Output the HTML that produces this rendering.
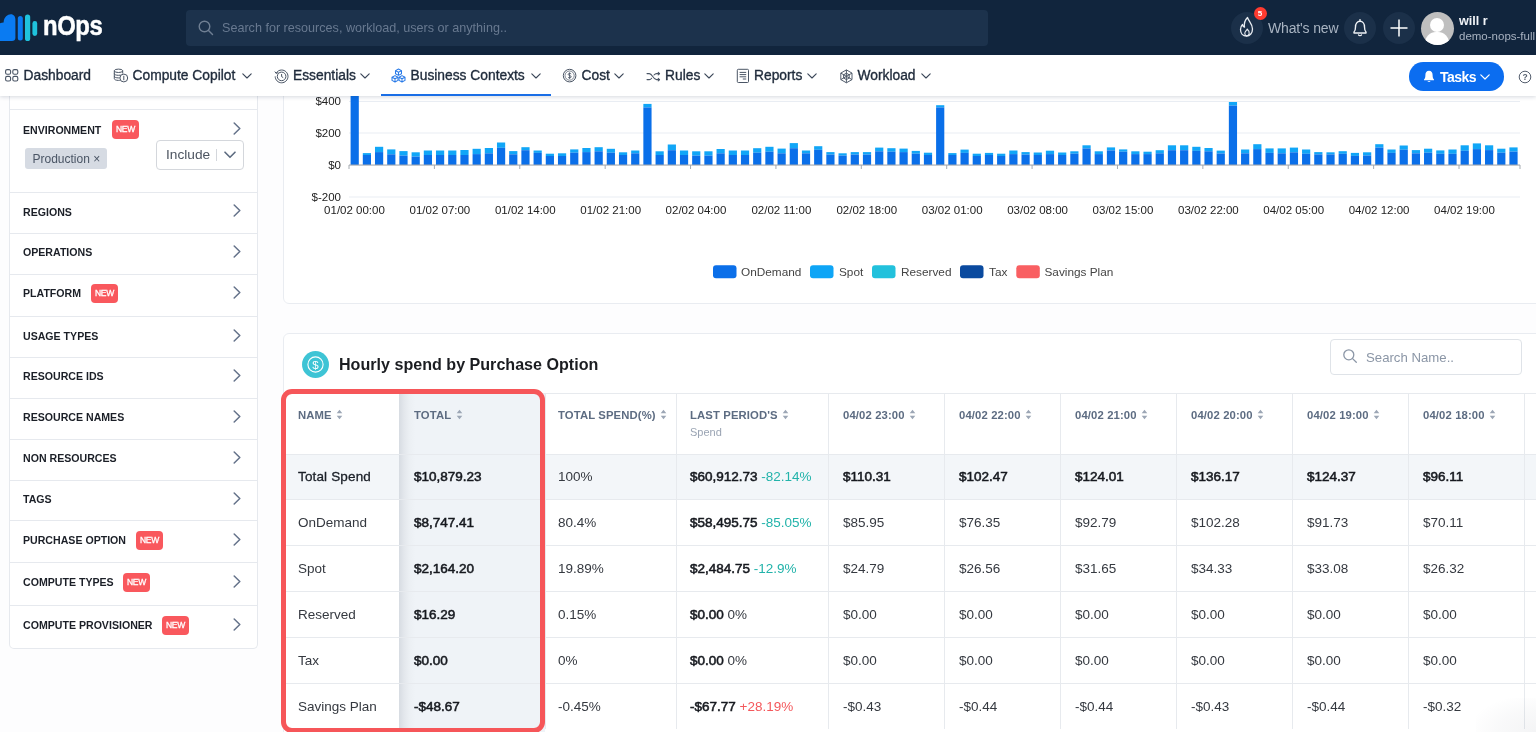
<!DOCTYPE html>
<html>
<head>
<meta charset="utf-8">
<title>nOps</title>
<style>
*{box-sizing:border-box;margin:0;padding:0}
html,body{width:1536px;height:732px;overflow:hidden;background:#fdfdfe;font-family:"Liberation Sans",sans-serif;color:#1f2937}
.abs{position:absolute}
#hdr{position:absolute;left:0;top:0;width:1536px;height:55px;background:#11253d}
#nav{position:absolute;left:0;top:55px;width:1536px;height:41px;background:#fff;box-shadow:0 1px 4px rgba(20,40,70,.18);z-index:5}
.ni{position:absolute;top:0;height:41px;line-height:42px;font-size:13.8px;color:#1f2b3b;white-space:nowrap;-webkit-text-stroke:.35px #1f2b3b}
.ni svg{position:absolute}
#search{position:absolute;left:186px;top:10px;width:802px;height:36px;border-radius:4px;background:#1c324c}
#search span{position:absolute;left:36px;top:0;line-height:36px;font-size:12.6px;color:#687990;white-space:nowrap}
.circ{position:absolute;width:32px;height:32px;border-radius:50%;background:#1b3049}
/* sidebar */
#side{position:absolute;left:9px;top:96px;width:249px;height:552.5px;background:#fff;border:1px solid #e6e9ee;border-top:none;border-radius:0 0 5px 5px}
.sr{position:absolute;left:0;width:247px;border-top:1px solid #e6e9ee}
.sl{position:absolute;left:13px;font-size:10.6px;font-weight:bold;color:#1b1f27;white-space:nowrap;letter-spacing:0}
.new{position:absolute;width:27px;height:19px;border-radius:4px;background:#f9585d;color:#fff;font-size:8.5px;line-height:19px;text-align:center;letter-spacing:-.2px;-webkit-text-stroke:.3px #fff}
.chev{position:absolute;left:223px;width:8px;height:13px}
/* cards */
.card{position:absolute;background:#fff;border:1px solid #e9ecf1;border-radius:6px}
#chart text{font-family:"Liberation Sans",sans-serif;font-size:11.5px;fill:#222}
/* table */
.th{position:absolute;font-size:11.3px;font-weight:bold;color:#5d6c82;white-space:nowrap;letter-spacing:.12px}
.td{position:absolute;font-size:13.5px;color:#353940;white-space:nowrap}
.b{font-weight:normal;color:#16191f;-webkit-text-stroke:.55px #16191f}
.hl{position:absolute;height:1px;background:#e7eaee}
.vl{position:absolute;width:1px;background:#e7eaee}
.srt{display:inline-block;width:7px;height:11px;margin-left:4.5px;vertical-align:-1.5px}
.g{color:#22b3aa}
.r{color:#f4585c}
</style>
</head>
<body>
<div id="root" style="position:absolute;left:0;top:0;width:1536px;height:732px;overflow:hidden;will-change:transform">
<!-- HEADER -->
<div id="hdr">
  <svg class="abs" style="left:0;top:12px" width="112" height="32" viewBox="0 0 112 32">
    <path d="M-5 20 C-5 13 0 10.5 3.6 10.5 C4 5 7.6 2.3 10.8 2.3 C13.8 2.3 15.4 4.6 15.4 7.5 L15.4 26 C15.4 28 14 29 12 29 L-5 29 Z" fill="#0a7bf2"/>
    <rect x="17.8" y="4" width="5" height="24.5" rx="2.5" fill="#0a7bf2"/>
    <rect x="25" y="2.5" width="5.2" height="26.5" rx="2.6" fill="#1fc3dd"/>
    <rect x="32.4" y="9" width="4.8" height="15" rx="2.4" fill="#1fc3dd"/>
  </svg>
  <div class="abs" id="logotxt" style="left:43px;top:9px;font-size:27px;line-height:34px;font-weight:bold;color:#fff;letter-spacing:-.5px;-webkit-text-stroke:.5px #fff;transform-origin:0 50%;transform:scaleX(.885)">nOps</div>
  <div id="search">
    <svg class="abs" style="left:11px;top:9px" width="18" height="18" viewBox="0 0 18 18"><circle cx="7.5" cy="7.5" r="5.3" fill="none" stroke="#6f7f93" stroke-width="1.4"/><path d="M11.5 11.5 L15.5 15.5" stroke="#6f7f93" stroke-width="1.4" stroke-linecap="round"/></svg>
    <span>Search for resources, workload, users or anything..</span>
  </div>
  <!-- right icons -->
  <div class="circ" style="left:1231px;top:12px"></div>
  <svg class="abs" style="left:1238px;top:16px" width="18" height="22" viewBox="0 0 18 22"><path d="M9.5 1.5 C10.5 5 14.5 7.5 14.5 13 C14.5 17 12 20 8.5 20 C5 20 2.5 17.5 2.5 13.5 C2.5 11 3.5 9.5 4.5 8.5 C4.8 10 5.5 11 6.5 11.2 C6 8 7 4 9.5 1.5 Z" fill="none" stroke="#e9edf2" stroke-width="1.3" stroke-linejoin="round"/><path d="M8.7 20 C6.8 19.3 6.3 17.3 7.3 15.8 C8 14.8 8.9 14.2 9.1 13 C10.6 14.3 11.5 15.8 11.2 17.5 C11 18.8 10 19.7 8.7 20 Z" fill="none" stroke="#e9edf2" stroke-width="1.1" stroke-linejoin="round"/></svg>
  <div class="abs" style="left:1253.5px;top:7px;width:13px;height:13px;border-radius:50%;background:#ff3b30;color:#fff;font-size:8px;font-weight:bold;line-height:13px;text-align:center">5</div>
  <div class="abs" style="left:1268px;top:18px;font-size:14px;line-height:20px;color:#a9b4c2;white-space:nowrap;letter-spacing:-.15px">What's new</div>
  <div class="circ" style="left:1344px;top:12px"></div>
  <svg class="abs" style="left:1351px;top:18px" width="18" height="20" viewBox="0 0 18 20"><path d="M3 15 L3 14 C4.3 13 4.5 11.5 4.5 9 C4.5 5.5 6.3 3.3 9 3.3 C11.7 3.3 13.5 5.5 13.5 9 C13.5 11.5 13.7 13 15 14 L15 15 Z" fill="none" stroke="#eef1f5" stroke-width="1.4" stroke-linejoin="round"/><path d="M7.6 17 C8 17.8 10 17.8 10.4 17" fill="none" stroke="#eef1f5" stroke-width="1.4" stroke-linecap="round"/><path d="M9 1.6 L9 3" stroke="#eef1f5" stroke-width="1.4" stroke-linecap="round"/></svg>
  <div class="circ" style="left:1383px;top:12px"></div>
  <svg class="abs" style="left:1389px;top:18px" width="20" height="20" viewBox="0 0 20 20"><path d="M10 1.5 V18.5 M1.5 10 H18.5" stroke="#fff" stroke-width="1.5"/></svg>
  <div class="abs" style="left:1420.5px;top:11.5px;width:33px;height:33px;border-radius:50%;background:#bfbfbf;overflow:hidden">
    <div class="abs" style="left:9.5px;top:6px;width:14px;height:14px;border-radius:50%;background:#fff"></div>
    <div class="abs" style="left:4.5px;top:20px;width:24px;height:22px;border-radius:11px 11px 0 0;background:#fff"></div>
  </div>
  <div class="abs" style="left:1459px;top:13px;font-size:12.6px;line-height:16px;font-weight:bold;color:#f1f4f8;white-space:nowrap">will r</div>
  <div class="abs" style="left:1459px;top:29px;font-size:11.5px;line-height:15px;color:#a8b2c0;white-space:nowrap">demo-nops-full</div>
</div>
<!-- NAV -->
<div id="nav">
  <div class="ni" style="left:23.5px">Dashboard</div>
  <svg class="abs" style="left:4px;top:13px" width="16" height="15" viewBox="0 0 16 15"><g fill="none" stroke="#4a5565" stroke-width="1.1"><rect x="1.6" y="1.6" width="5" height="4.6" rx="1.5"/><rect x="8.8" y="1.6" width="5" height="4.6" rx="1.5"/><rect x="1.6" y="8.4" width="5" height="4.6" rx="1.5"/><rect x="8.8" y="8.4" width="5" height="4.6" rx="1.5"/></g></svg>
  <div class="ni" style="left:132.5px">Compute Copilot</div>
  <svg class="abs" style="left:113px;top:13px" width="16" height="15" viewBox="0 0 16 15"><g fill="none" stroke="#4a5565" stroke-width="1"><ellipse cx="5.5" cy="2.8" rx="4.2" ry="1.7"/><path d="M1.3 2.8 V10.6 C1.3 11.6 3 12.4 5.5 12.4 C6 12.4 6.4 12.4 6.8 12.3 M9.7 2.8 V5.5 M1.3 5.6 C1.3 6.6 3 7.3 5.5 7.3 C6.3 7.3 7 7.2 7.6 7.1 M1.3 8.2 C1.3 9.2 3 9.9 5.5 9.9 C5.9 9.9 6.3 9.9 6.6 9.8"/><circle cx="10.8" cy="10" r="3.9"/><path d="M10.8 7.8 V12.2"/></g></svg>
  <svg class="abs" style="left:242px;top:17.5px" width="10" height="6" viewBox="0 0 10 6"><path d="M0.8 0.8 L5 5 L9.2 0.8" fill="none" stroke="#3a4658" stroke-width="1.1" stroke-linecap="round" stroke-linejoin="round"/></svg>
  <div class="ni" style="left:293px">Essentials</div>
  <svg class="abs" style="left:274px;top:13.5px" width="15" height="15" viewBox="0 0 15 15"><g fill="none" stroke="#4a5565" stroke-width="1"><circle cx="7.6" cy="7.4" r="4.3"/><path d="M7.6 5 V7.6 L9.2 8.6"/><path d="M2.2 4.2 C3.3 2.3 5.3 1 7.6 1 C11.1 1 14 3.9 14 7.4 C14 10.9 11.1 13.8 7.6 13.8 C4.1 13.8 1.2 10.9 1.2 7.4"/><path d="M0.8 2.6 L2.2 4.4 L4.3 3.6"/></g></svg>
  <svg class="abs" style="left:359.5px;top:17.5px" width="10" height="6" viewBox="0 0 10 6"><path d="M0.8 0.8 L5 5 L9.2 0.8" fill="none" stroke="#3a4658" stroke-width="1.1" stroke-linecap="round" stroke-linejoin="round"/></svg>
  <div class="ni" style="left:410.5px">Business Contexts</div>
  <svg class="abs" style="left:391px;top:13px" width="15" height="15" viewBox="0 0 15 15"><g fill="none" stroke="#2a7be8" stroke-width="1.05" stroke-linejoin="round"><path d="M7.5 1 L10.5 2.6 V5.8 L7.5 7.4 L4.5 5.8 V2.6 Z M4.5 2.6 L7.5 4.2 L10.5 2.6 M7.5 4.2 V7.4"/><path d="M4 7.6 L7 9.2 V12.4 L4 14 L1 12.4 V9.2 Z M1 9.2 L4 10.8 L7 9.2 M4 10.8 V14"/><path d="M11 7.6 L14 9.2 V12.4 L11 14 L8 12.4 V9.2 Z M8 9.2 L11 10.8 L14 9.2 M11 10.8 V14"/></g></svg>
  <svg class="abs" style="left:530.8px;top:17.5px" width="10" height="6" viewBox="0 0 10 6"><path d="M0.8 0.8 L5 5 L9.2 0.8" fill="none" stroke="#3a4658" stroke-width="1.1" stroke-linecap="round" stroke-linejoin="round"/></svg>
  <div class="ni" style="left:581.5px">Cost</div>
  <svg class="abs" style="left:562px;top:13px" width="15" height="15" viewBox="0 0 15 15"><g fill="none" stroke="#4a5565" stroke-width="1"><circle cx="7.6" cy="7.6" r="6.3"/><circle cx="7.6" cy="7.6" r="4.6" stroke-width=".7"/><path d="M9.2 5.9 C8.8 5.2 6.2 5 6.2 6.4 C6.2 7.8 9.2 7.2 9.2 8.8 C9.2 10.2 6.4 10 6 9.2 M7.6 4.4 V10.9" stroke-width=".9"/></g></svg>
  <svg class="abs" style="left:613.5px;top:17.5px" width="10" height="6" viewBox="0 0 10 6"><path d="M0.8 0.8 L5 5 L9.2 0.8" fill="none" stroke="#3a4658" stroke-width="1.1" stroke-linecap="round" stroke-linejoin="round"/></svg>
  <div class="ni" style="left:665px">Rules</div>
  <svg class="abs" style="left:646px;top:15.5px" width="15" height="11" viewBox="0 0 15 11"><g fill="none" stroke="#4a5565" stroke-width="1.05" stroke-linecap="round" stroke-linejoin="round"><path d="M1 2.6 H3.3 C6.5 2.6 7 8.6 10.5 8.6 H13.5 M1 8.6 H3.3 C4.3 8.6 5 8 5.6 7.2 M8 4 C8.7 3.2 9.4 2.6 10.5 2.6 H13.5"/><path d="M12.2 1.3 L13.6 2.6 L12.2 3.9 M12.2 7.3 L13.6 8.6 L12.2 9.9"/></g></svg>
  <svg class="abs" style="left:704px;top:17.5px" width="10" height="6" viewBox="0 0 10 6"><path d="M0.8 0.8 L5 5 L9.2 0.8" fill="none" stroke="#3a4658" stroke-width="1.1" stroke-linecap="round" stroke-linejoin="round"/></svg>
  <div class="ni" style="left:754px">Reports</div>
  <svg class="abs" style="left:735.5px;top:13px" width="14" height="16" viewBox="0 0 14 16"><g fill="none" stroke="#4a5565" stroke-width="1"><rect x="1.3" y="1.3" width="11.2" height="13.2" rx="1"/><path d="M3.6 4.4 H10.2 M3.6 6.6 H10.2 M3.6 8.8 H10.2 M6.8 11 H10.2"/></g></svg>
  <svg class="abs" style="left:807.3px;top:17.5px" width="10" height="6" viewBox="0 0 10 6"><path d="M0.8 0.8 L5 5 L9.2 0.8" fill="none" stroke="#3a4658" stroke-width="1.1" stroke-linecap="round" stroke-linejoin="round"/></svg>
  <div class="ni" style="left:857.5px">Workload</div>
  <svg class="abs" style="left:839px;top:13.5px" width="15" height="15" viewBox="0 0 15 15"><g fill="none" stroke="#4a5565" stroke-width=".95" stroke-linejoin="round"><path d="M7.4 0.9 L13 4.1 V10.6 L7.4 13.8 L1.8 10.6 V4.1 Z"/><path d="M7.4 0.9 V13.8 M1.8 4.1 L13 10.6 M13 4.1 L1.8 10.6"/><path d="M7.4 4.2 L10.2 5.8 V9 L7.4 10.6 L4.6 9 V5.8 Z"/></g></svg>
  <svg class="abs" style="left:921px;top:17.5px" width="10" height="6" viewBox="0 0 10 6"><path d="M0.8 0.8 L5 5 L9.2 0.8" fill="none" stroke="#3a4658" stroke-width="1.1" stroke-linecap="round" stroke-linejoin="round"/></svg>
  <div class="abs" style="left:381px;top:39px;width:170px;height:2px;background:#1a6ee6"></div>
  <div class="abs" style="left:1409px;top:7px;width:95px;height:28.5px;border-radius:14.25px;background:#0b6df0"></div>
  <div class="abs" style="left:1440px;top:7.5px;line-height:28px;font-size:14px;font-weight:bold;color:#fff;letter-spacing:-.5px">Tasks</div>
  <svg class="abs" style="left:1423px;top:14.5px" width="12" height="13" viewBox="0 0 12 13"><path d="M6 0.8 C8.4 0.8 9.6 2.6 9.6 5 C9.6 7.4 10 8.6 11 9.6 V10.2 H1 V9.6 C2 8.6 2.4 7.4 2.4 5 C2.4 2.6 3.6 0.8 6 0.8 Z M4.6 11 H7.4 C7.2 12.2 4.8 12.2 4.6 11 Z" fill="#fff"/></svg>
  <svg class="abs" style="left:1480px;top:18.5px" width="10" height="6" viewBox="0 0 10 6"><path d="M0.8 0.8 L5 5 L9.2 0.8" fill="none" stroke="#fff" stroke-width="1.2" stroke-linecap="round" stroke-linejoin="round"/></svg>
  <svg class="abs" style="left:1518px;top:15px" width="14" height="14" viewBox="0 0 14 14"><circle cx="7" cy="7" r="5.8" fill="none" stroke="#555f6e" stroke-width="1"/><text x="7" y="10" text-anchor="middle" font-family="Liberation Sans" font-size="8.5" font-weight="bold" fill="#555f6e">?</text></svg>
</div>
<!-- SIDEBAR -->
<div id="side">
<div class="sr" style="top:13px;height:1px"></div>
<div class="sl" style="top:26.6px;line-height:14px">ENVIRONMENT</div>
<div class="new" style="left:102px;top:23.9px">NEW</div>
<svg class="chev" style="top:26.2px" viewBox="0 0 8 13"><path d="M1.2 1 L6.8 6.5 L1.2 12" fill="none" stroke="#64728a" stroke-width="1.5" stroke-linecap="round" stroke-linejoin="round"/></svg>
<div class="sr" style="top:96px;height:1px"></div>
<div class="sl" style="top:108.6px;line-height:14px">REGIONS</div>
<svg class="chev" style="top:108.2px" viewBox="0 0 8 13"><path d="M1.2 1 L6.8 6.5 L1.2 12" fill="none" stroke="#64728a" stroke-width="1.5" stroke-linecap="round" stroke-linejoin="round"/></svg>
<div class="sr" style="top:137px;height:1px"></div>
<div class="sl" style="top:149.4px;line-height:14px">OPERATIONS</div>
<svg class="chev" style="top:149.0px" viewBox="0 0 8 13"><path d="M1.2 1 L6.8 6.5 L1.2 12" fill="none" stroke="#64728a" stroke-width="1.5" stroke-linecap="round" stroke-linejoin="round"/></svg>
<div class="sr" style="top:178px;height:1px"></div>
<div class="sl" style="top:190.4px;line-height:14px">PLATFORM</div>
<div class="new" style="left:81px;top:187.7px">NEW</div>
<svg class="chev" style="top:190.0px" viewBox="0 0 8 13"><path d="M1.2 1 L6.8 6.5 L1.2 12" fill="none" stroke="#64728a" stroke-width="1.5" stroke-linecap="round" stroke-linejoin="round"/></svg>
<div class="sr" style="top:219.5px;height:1px"></div>
<div class="sl" style="top:232.9px;line-height:14px">USAGE TYPES</div>
<svg class="chev" style="top:232.5px" viewBox="0 0 8 13"><path d="M1.2 1 L6.8 6.5 L1.2 12" fill="none" stroke="#64728a" stroke-width="1.5" stroke-linecap="round" stroke-linejoin="round"/></svg>
<div class="sr" style="top:260.5px;height:1px"></div>
<div class="sl" style="top:273.4px;line-height:14px">RESOURCE IDS</div>
<svg class="chev" style="top:273.0px" viewBox="0 0 8 13"><path d="M1.2 1 L6.8 6.5 L1.2 12" fill="none" stroke="#64728a" stroke-width="1.5" stroke-linecap="round" stroke-linejoin="round"/></svg>
<div class="sr" style="top:302px;height:1px"></div>
<div class="sl" style="top:314.4px;line-height:14px">RESOURCE NAMES</div>
<svg class="chev" style="top:314.0px" viewBox="0 0 8 13"><path d="M1.2 1 L6.8 6.5 L1.2 12" fill="none" stroke="#64728a" stroke-width="1.5" stroke-linecap="round" stroke-linejoin="round"/></svg>
<div class="sr" style="top:342.5px;height:1px"></div>
<div class="sl" style="top:355.4px;line-height:14px">NON RESOURCES</div>
<svg class="chev" style="top:355.0px" viewBox="0 0 8 13"><path d="M1.2 1 L6.8 6.5 L1.2 12" fill="none" stroke="#64728a" stroke-width="1.5" stroke-linecap="round" stroke-linejoin="round"/></svg>
<div class="sr" style="top:384px;height:1px"></div>
<div class="sl" style="top:396.4px;line-height:14px">TAGS</div>
<svg class="chev" style="top:396.0px" viewBox="0 0 8 13"><path d="M1.2 1 L6.8 6.5 L1.2 12" fill="none" stroke="#64728a" stroke-width="1.5" stroke-linecap="round" stroke-linejoin="round"/></svg>
<div class="sr" style="top:424px;height:1px"></div>
<div class="sl" style="top:437.4px;line-height:14px">PURCHASE OPTION</div>
<div class="new" style="left:126px;top:434.7px">NEW</div>
<svg class="chev" style="top:437.0px" viewBox="0 0 8 13"><path d="M1.2 1 L6.8 6.5 L1.2 12" fill="none" stroke="#64728a" stroke-width="1.5" stroke-linecap="round" stroke-linejoin="round"/></svg>
<div class="sr" style="top:466px;height:1px"></div>
<div class="sl" style="top:479.4px;line-height:14px">COMPUTE TYPES</div>
<div class="new" style="left:113px;top:476.7px">NEW</div>
<svg class="chev" style="top:479.0px" viewBox="0 0 8 13"><path d="M1.2 1 L6.8 6.5 L1.2 12" fill="none" stroke="#64728a" stroke-width="1.5" stroke-linecap="round" stroke-linejoin="round"/></svg>
<div class="sr" style="top:509px;height:1px"></div>
<div class="sl" style="top:522.4px;line-height:14px">COMPUTE PROVISIONER</div>
<div class="new" style="left:152px;top:519.7px">NEW</div>
<svg class="chev" style="top:522.0px" viewBox="0 0 8 13"><path d="M1.2 1 L6.8 6.5 L1.2 12" fill="none" stroke="#64728a" stroke-width="1.5" stroke-linecap="round" stroke-linejoin="round"/></svg>
<div class="abs" style="left:15px;top:51.5px;width:82px;height:21.5px;border-radius:3px;background:#d6dbe3;font-size:12px;line-height:22.5px;color:#4a5565;padding-left:7.5px;white-space:nowrap">Production ×</div>
<div class="abs" style="left:145.6px;top:43.8px;width:88.6px;height:29.8px;border-radius:4px;border:1px solid #d4d7dc;background:#fff"></div>
<div class="abs" style="left:156px;top:43.9px;line-height:29.6px;font-size:13.7px;color:#4d5561">Include</div>
<div class="abs" style="left:206px;top:53px;width:1px;height:12px;background:#d4d7dc"></div>
<svg class="abs" style="left:213.5px;top:55px" width="12" height="8" viewBox="0 0 12 8"><path d="M1 1.2 L6 6.3 L11 1.2" fill="none" stroke="#5d6b80" stroke-width="1.6" stroke-linecap="round" stroke-linejoin="round"/></svg>
</div>
<!-- CHART CARD -->
<div class="card" style="left:283px;top:60px;width:1300px;height:243.5px"></div>
<svg id="chart" class="abs" style="left:0;top:0" width="1536" height="320" viewBox="0 0 1536 320">
  <rect x="349" y="101" width="1171" height="1" fill="#e9edf3"/>
  <rect x="349" y="132.5" width="1171" height="1" fill="#e9edf3"/>
  <rect x="349" y="196.5" width="1171" height="1" fill="#e9edf3"/>
  <g text-anchor="end"><text x="341" y="104.5">$400</text><text x="341" y="136.5">$200</text><text x="341" y="168.5">$0</text><text x="341" y="200.5">$-200</text></g>
<rect x="350.60" y="75.00" width="8.2" height="5.00" fill="#11a6f7"/>
<rect x="350.60" y="80.00" width="8.2" height="85.00" fill="#0a6fe9"/>
<rect x="362.80" y="153.10" width="8.2" height="1.90" fill="#11a6f7"/>
<rect x="362.80" y="155.00" width="8.2" height="10.00" fill="#0a6fe9"/>
<rect x="374.99" y="146.80" width="8.2" height="5.30" fill="#11a6f7"/>
<rect x="374.99" y="152.10" width="8.2" height="12.90" fill="#0a6fe9"/>
<rect x="387.19" y="149.40" width="8.2" height="4.90" fill="#11a6f7"/>
<rect x="387.19" y="154.30" width="8.2" height="10.70" fill="#0a6fe9"/>
<rect x="399.39" y="151.10" width="8.2" height="4.50" fill="#11a6f7"/>
<rect x="399.39" y="155.60" width="8.2" height="9.40" fill="#0a6fe9"/>
<rect x="411.59" y="152.30" width="8.2" height="4.30" fill="#11a6f7"/>
<rect x="411.59" y="156.60" width="8.2" height="8.40" fill="#0a6fe9"/>
<rect x="423.79" y="150.50" width="8.2" height="4.50" fill="#11a6f7"/>
<rect x="423.79" y="155.00" width="8.2" height="10.00" fill="#0a6fe9"/>
<rect x="435.98" y="150.50" width="8.2" height="4.50" fill="#11a6f7"/>
<rect x="435.98" y="155.00" width="8.2" height="10.00" fill="#0a6fe9"/>
<rect x="448.18" y="150.50" width="8.2" height="4.50" fill="#11a6f7"/>
<rect x="448.18" y="155.00" width="8.2" height="10.00" fill="#0a6fe9"/>
<rect x="460.38" y="150.00" width="8.2" height="5.00" fill="#11a6f7"/>
<rect x="460.38" y="155.00" width="8.2" height="10.00" fill="#0a6fe9"/>
<rect x="472.58" y="148.80" width="8.2" height="5.30" fill="#11a6f7"/>
<rect x="472.58" y="154.10" width="8.2" height="10.90" fill="#0a6fe9"/>
<rect x="484.78" y="148.00" width="8.2" height="5.30" fill="#11a6f7"/>
<rect x="484.78" y="153.30" width="8.2" height="11.70" fill="#0a6fe9"/>
<rect x="496.97" y="142.50" width="8.2" height="5.30" fill="#11a6f7"/>
<rect x="496.97" y="147.80" width="8.2" height="17.20" fill="#0a6fe9"/>
<rect x="509.17" y="151.10" width="8.2" height="3.20" fill="#11a6f7"/>
<rect x="509.17" y="154.30" width="8.2" height="10.70" fill="#0a6fe9"/>
<rect x="521.37" y="147.20" width="8.2" height="3.00" fill="#11a6f7"/>
<rect x="521.37" y="150.20" width="8.2" height="14.80" fill="#0a6fe9"/>
<rect x="533.57" y="150.50" width="8.2" height="2.40" fill="#11a6f7"/>
<rect x="533.57" y="152.90" width="8.2" height="12.10" fill="#0a6fe9"/>
<rect x="545.77" y="153.70" width="8.2" height="2.30" fill="#11a6f7"/>
<rect x="545.77" y="156.00" width="8.2" height="9.00" fill="#0a6fe9"/>
<rect x="557.96" y="153.30" width="8.2" height="2.70" fill="#11a6f7"/>
<rect x="557.96" y="156.00" width="8.2" height="9.00" fill="#0a6fe9"/>
<rect x="570.16" y="149.40" width="8.2" height="3.30" fill="#11a6f7"/>
<rect x="570.16" y="152.70" width="8.2" height="12.30" fill="#0a6fe9"/>
<rect x="582.36" y="148.00" width="8.2" height="4.10" fill="#11a6f7"/>
<rect x="582.36" y="152.10" width="8.2" height="12.90" fill="#0a6fe9"/>
<rect x="594.56" y="147.20" width="8.2" height="4.10" fill="#11a6f7"/>
<rect x="594.56" y="151.30" width="8.2" height="13.70" fill="#0a6fe9"/>
<rect x="606.76" y="148.80" width="8.2" height="3.90" fill="#11a6f7"/>
<rect x="606.76" y="152.70" width="8.2" height="12.30" fill="#0a6fe9"/>
<rect x="618.95" y="152.30" width="8.2" height="2.70" fill="#11a6f7"/>
<rect x="618.95" y="155.00" width="8.2" height="10.00" fill="#0a6fe9"/>
<rect x="631.15" y="150.50" width="8.2" height="2.80" fill="#11a6f7"/>
<rect x="631.15" y="153.30" width="8.2" height="11.70" fill="#0a6fe9"/>
<rect x="643.35" y="103.90" width="8.2" height="3.50" fill="#11a6f7"/>
<rect x="643.35" y="107.40" width="8.2" height="57.60" fill="#0a6fe9"/>
<rect x="655.55" y="151.30" width="8.2" height="3.70" fill="#11a6f7"/>
<rect x="655.55" y="155.00" width="8.2" height="10.00" fill="#0a6fe9"/>
<rect x="667.74" y="144.50" width="8.2" height="5.70" fill="#11a6f7"/>
<rect x="667.74" y="150.20" width="8.2" height="14.80" fill="#0a6fe9"/>
<rect x="679.94" y="150.50" width="8.2" height="4.50" fill="#11a6f7"/>
<rect x="679.94" y="155.00" width="8.2" height="10.00" fill="#0a6fe9"/>
<rect x="692.14" y="151.30" width="8.2" height="4.30" fill="#11a6f7"/>
<rect x="692.14" y="155.60" width="8.2" height="9.40" fill="#0a6fe9"/>
<rect x="704.34" y="151.30" width="8.2" height="4.30" fill="#11a6f7"/>
<rect x="704.34" y="155.60" width="8.2" height="9.40" fill="#0a6fe9"/>
<rect x="716.54" y="149.00" width="8.2" height="4.30" fill="#11a6f7"/>
<rect x="716.54" y="153.30" width="8.2" height="11.70" fill="#0a6fe9"/>
<rect x="728.73" y="150.50" width="8.2" height="4.50" fill="#11a6f7"/>
<rect x="728.73" y="155.00" width="8.2" height="10.00" fill="#0a6fe9"/>
<rect x="740.93" y="150.50" width="8.2" height="4.50" fill="#11a6f7"/>
<rect x="740.93" y="155.00" width="8.2" height="10.00" fill="#0a6fe9"/>
<rect x="753.13" y="148.20" width="8.2" height="4.50" fill="#11a6f7"/>
<rect x="753.13" y="152.70" width="8.2" height="12.30" fill="#0a6fe9"/>
<rect x="765.33" y="146.80" width="8.2" height="4.90" fill="#11a6f7"/>
<rect x="765.33" y="151.70" width="8.2" height="13.30" fill="#0a6fe9"/>
<rect x="777.53" y="148.60" width="8.2" height="4.70" fill="#11a6f7"/>
<rect x="777.53" y="153.30" width="8.2" height="11.70" fill="#0a6fe9"/>
<rect x="789.72" y="143.10" width="8.2" height="5.10" fill="#11a6f7"/>
<rect x="789.72" y="148.20" width="8.2" height="16.80" fill="#0a6fe9"/>
<rect x="801.92" y="150.50" width="8.2" height="2.80" fill="#11a6f7"/>
<rect x="801.92" y="153.30" width="8.2" height="11.70" fill="#0a6fe9"/>
<rect x="814.12" y="146.20" width="8.2" height="3.60" fill="#11a6f7"/>
<rect x="814.12" y="149.80" width="8.2" height="15.20" fill="#0a6fe9"/>
<rect x="826.32" y="152.10" width="8.2" height="2.50" fill="#11a6f7"/>
<rect x="826.32" y="154.60" width="8.2" height="10.40" fill="#0a6fe9"/>
<rect x="838.52" y="153.30" width="8.2" height="2.30" fill="#11a6f7"/>
<rect x="838.52" y="155.60" width="8.2" height="9.40" fill="#0a6fe9"/>
<rect x="850.71" y="152.10" width="8.2" height="2.50" fill="#11a6f7"/>
<rect x="850.71" y="154.60" width="8.2" height="10.40" fill="#0a6fe9"/>
<rect x="862.91" y="152.10" width="8.2" height="2.50" fill="#11a6f7"/>
<rect x="862.91" y="154.60" width="8.2" height="10.40" fill="#0a6fe9"/>
<rect x="875.11" y="147.60" width="8.2" height="3.70" fill="#11a6f7"/>
<rect x="875.11" y="151.30" width="8.2" height="13.70" fill="#0a6fe9"/>
<rect x="887.31" y="148.20" width="8.2" height="3.50" fill="#11a6f7"/>
<rect x="887.31" y="151.70" width="8.2" height="13.30" fill="#0a6fe9"/>
<rect x="899.51" y="148.60" width="8.2" height="3.50" fill="#11a6f7"/>
<rect x="899.51" y="152.10" width="8.2" height="12.90" fill="#0a6fe9"/>
<rect x="911.70" y="150.90" width="8.2" height="2.80" fill="#11a6f7"/>
<rect x="911.70" y="153.70" width="8.2" height="11.30" fill="#0a6fe9"/>
<rect x="923.90" y="152.70" width="8.2" height="2.30" fill="#11a6f7"/>
<rect x="923.90" y="155.00" width="8.2" height="10.00" fill="#0a6fe9"/>
<rect x="936.10" y="105.20" width="8.2" height="2.20" fill="#11a6f7"/>
<rect x="936.10" y="107.40" width="8.2" height="57.60" fill="#0a6fe9"/>
<rect x="948.30" y="153.10" width="8.2" height="1.90" fill="#11a6f7"/>
<rect x="948.30" y="155.00" width="8.2" height="10.00" fill="#0a6fe9"/>
<rect x="960.49" y="149.60" width="8.2" height="3.30" fill="#11a6f7"/>
<rect x="960.49" y="152.90" width="8.2" height="12.10" fill="#0a6fe9"/>
<rect x="972.69" y="153.70" width="8.2" height="2.30" fill="#11a6f7"/>
<rect x="972.69" y="156.00" width="8.2" height="9.00" fill="#0a6fe9"/>
<rect x="984.89" y="152.90" width="8.2" height="2.10" fill="#11a6f7"/>
<rect x="984.89" y="155.00" width="8.2" height="10.00" fill="#0a6fe9"/>
<rect x="997.09" y="153.70" width="8.2" height="2.30" fill="#11a6f7"/>
<rect x="997.09" y="156.00" width="8.2" height="9.00" fill="#0a6fe9"/>
<rect x="1009.29" y="150.50" width="8.2" height="3.60" fill="#11a6f7"/>
<rect x="1009.29" y="154.10" width="8.2" height="10.90" fill="#0a6fe9"/>
<rect x="1021.48" y="152.10" width="8.2" height="2.50" fill="#11a6f7"/>
<rect x="1021.48" y="154.60" width="8.2" height="10.40" fill="#0a6fe9"/>
<rect x="1033.68" y="152.50" width="8.2" height="2.50" fill="#11a6f7"/>
<rect x="1033.68" y="155.00" width="8.2" height="10.00" fill="#0a6fe9"/>
<rect x="1045.88" y="150.70" width="8.2" height="3.40" fill="#11a6f7"/>
<rect x="1045.88" y="154.10" width="8.2" height="10.90" fill="#0a6fe9"/>
<rect x="1058.08" y="152.50" width="8.2" height="2.50" fill="#11a6f7"/>
<rect x="1058.08" y="155.00" width="8.2" height="10.00" fill="#0a6fe9"/>
<rect x="1070.28" y="151.30" width="8.2" height="2.40" fill="#11a6f7"/>
<rect x="1070.28" y="153.70" width="8.2" height="11.30" fill="#0a6fe9"/>
<rect x="1082.47" y="145.30" width="8.2" height="3.10" fill="#11a6f7"/>
<rect x="1082.47" y="148.40" width="8.2" height="16.60" fill="#0a6fe9"/>
<rect x="1094.67" y="151.30" width="8.2" height="2.80" fill="#11a6f7"/>
<rect x="1094.67" y="154.10" width="8.2" height="10.90" fill="#0a6fe9"/>
<rect x="1106.87" y="147.40" width="8.2" height="3.00" fill="#11a6f7"/>
<rect x="1106.87" y="150.40" width="8.2" height="14.60" fill="#0a6fe9"/>
<rect x="1119.07" y="149.40" width="8.2" height="2.30" fill="#11a6f7"/>
<rect x="1119.07" y="151.70" width="8.2" height="13.30" fill="#0a6fe9"/>
<rect x="1131.27" y="151.30" width="8.2" height="2.80" fill="#11a6f7"/>
<rect x="1131.27" y="154.10" width="8.2" height="10.90" fill="#0a6fe9"/>
<rect x="1143.46" y="151.70" width="8.2" height="2.40" fill="#11a6f7"/>
<rect x="1143.46" y="154.10" width="8.2" height="10.90" fill="#0a6fe9"/>
<rect x="1155.66" y="150.20" width="8.2" height="3.10" fill="#11a6f7"/>
<rect x="1155.66" y="153.30" width="8.2" height="11.70" fill="#0a6fe9"/>
<rect x="1167.86" y="145.30" width="8.2" height="4.90" fill="#11a6f7"/>
<rect x="1167.86" y="150.20" width="8.2" height="14.80" fill="#0a6fe9"/>
<rect x="1180.06" y="145.30" width="8.2" height="4.90" fill="#11a6f7"/>
<rect x="1180.06" y="150.20" width="8.2" height="14.80" fill="#0a6fe9"/>
<rect x="1192.26" y="146.80" width="8.2" height="4.10" fill="#11a6f7"/>
<rect x="1192.26" y="150.90" width="8.2" height="14.10" fill="#0a6fe9"/>
<rect x="1204.45" y="148.00" width="8.2" height="3.30" fill="#11a6f7"/>
<rect x="1204.45" y="151.30" width="8.2" height="13.70" fill="#0a6fe9"/>
<rect x="1216.65" y="150.60" width="8.2" height="2.90" fill="#11a6f7"/>
<rect x="1216.65" y="153.50" width="8.2" height="11.50" fill="#0a6fe9"/>
<rect x="1228.85" y="102.00" width="8.2" height="3.60" fill="#11a6f7"/>
<rect x="1228.85" y="105.60" width="8.2" height="59.40" fill="#0a6fe9"/>
<rect x="1241.05" y="149.50" width="8.2" height="3.80" fill="#11a6f7"/>
<rect x="1241.05" y="153.30" width="8.2" height="11.70" fill="#0a6fe9"/>
<rect x="1253.24" y="144.20" width="8.2" height="4.90" fill="#11a6f7"/>
<rect x="1253.24" y="149.10" width="8.2" height="15.90" fill="#0a6fe9"/>
<rect x="1265.44" y="148.40" width="8.2" height="4.50" fill="#11a6f7"/>
<rect x="1265.44" y="152.90" width="8.2" height="12.10" fill="#0a6fe9"/>
<rect x="1277.64" y="148.40" width="8.2" height="4.90" fill="#11a6f7"/>
<rect x="1277.64" y="153.30" width="8.2" height="11.70" fill="#0a6fe9"/>
<rect x="1289.84" y="147.60" width="8.2" height="4.70" fill="#11a6f7"/>
<rect x="1289.84" y="152.30" width="8.2" height="12.70" fill="#0a6fe9"/>
<rect x="1302.04" y="149.50" width="8.2" height="4.30" fill="#11a6f7"/>
<rect x="1302.04" y="153.80" width="8.2" height="11.20" fill="#0a6fe9"/>
<rect x="1314.23" y="152.10" width="8.2" height="2.30" fill="#11a6f7"/>
<rect x="1314.23" y="154.40" width="8.2" height="10.60" fill="#0a6fe9"/>
<rect x="1326.43" y="152.30" width="8.2" height="2.10" fill="#11a6f7"/>
<rect x="1326.43" y="154.40" width="8.2" height="10.60" fill="#0a6fe9"/>
<rect x="1338.63" y="151.20" width="8.2" height="2.60" fill="#11a6f7"/>
<rect x="1338.63" y="153.80" width="8.2" height="11.20" fill="#0a6fe9"/>
<rect x="1350.83" y="152.90" width="8.2" height="3.00" fill="#11a6f7"/>
<rect x="1350.83" y="155.90" width="8.2" height="9.10" fill="#0a6fe9"/>
<rect x="1363.03" y="152.30" width="8.2" height="3.20" fill="#11a6f7"/>
<rect x="1363.03" y="155.50" width="8.2" height="9.50" fill="#0a6fe9"/>
<rect x="1375.22" y="144.20" width="8.2" height="3.40" fill="#11a6f7"/>
<rect x="1375.22" y="147.60" width="8.2" height="17.40" fill="#0a6fe9"/>
<rect x="1387.42" y="149.50" width="8.2" height="3.40" fill="#11a6f7"/>
<rect x="1387.42" y="152.90" width="8.2" height="12.10" fill="#0a6fe9"/>
<rect x="1399.62" y="145.50" width="8.2" height="4.20" fill="#11a6f7"/>
<rect x="1399.62" y="149.70" width="8.2" height="15.30" fill="#0a6fe9"/>
<rect x="1411.82" y="150.10" width="8.2" height="3.20" fill="#11a6f7"/>
<rect x="1411.82" y="153.30" width="8.2" height="11.70" fill="#0a6fe9"/>
<rect x="1424.02" y="148.70" width="8.2" height="4.00" fill="#11a6f7"/>
<rect x="1424.02" y="152.70" width="8.2" height="12.30" fill="#0a6fe9"/>
<rect x="1436.21" y="150.40" width="8.2" height="3.40" fill="#11a6f7"/>
<rect x="1436.21" y="153.80" width="8.2" height="11.20" fill="#0a6fe9"/>
<rect x="1448.41" y="149.50" width="8.2" height="4.30" fill="#11a6f7"/>
<rect x="1448.41" y="153.80" width="8.2" height="11.20" fill="#0a6fe9"/>
<rect x="1460.61" y="145.30" width="8.2" height="5.50" fill="#11a6f7"/>
<rect x="1460.61" y="150.80" width="8.2" height="14.20" fill="#0a6fe9"/>
<rect x="1472.81" y="143.40" width="8.2" height="5.70" fill="#11a6f7"/>
<rect x="1472.81" y="149.10" width="8.2" height="15.90" fill="#0a6fe9"/>
<rect x="1485.01" y="145.30" width="8.2" height="4.80" fill="#11a6f7"/>
<rect x="1485.01" y="150.10" width="8.2" height="14.90" fill="#0a6fe9"/>
<rect x="1497.20" y="148.70" width="8.2" height="4.00" fill="#11a6f7"/>
<rect x="1497.20" y="152.70" width="8.2" height="12.30" fill="#0a6fe9"/>
<rect x="1509.40" y="147.40" width="8.2" height="4.20" fill="#11a6f7"/>
<rect x="1509.40" y="151.60" width="8.2" height="13.40" fill="#0a6fe9"/>
<rect x="348.50" y="165" width="1" height="4" fill="#a6abb2"/>
<rect x="433.89" y="165" width="1" height="4" fill="#a6abb2"/>
<rect x="519.27" y="165" width="1" height="4" fill="#a6abb2"/>
<rect x="604.66" y="165" width="1" height="4" fill="#a6abb2"/>
<rect x="690.04" y="165" width="1" height="4" fill="#a6abb2"/>
<rect x="775.43" y="165" width="1" height="4" fill="#a6abb2"/>
<rect x="860.81" y="165" width="1" height="4" fill="#a6abb2"/>
<rect x="946.20" y="165" width="1" height="4" fill="#a6abb2"/>
<rect x="1031.58" y="165" width="1" height="4" fill="#a6abb2"/>
<rect x="1116.97" y="165" width="1" height="4" fill="#a6abb2"/>
<rect x="1202.35" y="165" width="1" height="4" fill="#a6abb2"/>
<rect x="1287.74" y="165" width="1" height="4" fill="#a6abb2"/>
<rect x="1373.12" y="165" width="1" height="4" fill="#a6abb2"/>
<rect x="1458.51" y="165" width="1" height="4" fill="#a6abb2"/>
<rect x="1519.5" y="165" width="1" height="4" fill="#a6abb2"/>
<text x="354.5" y="214" text-anchor="middle">01/02 00:00</text>
<text x="439.9" y="214" text-anchor="middle">01/02 07:00</text>
<text x="525.3" y="214" text-anchor="middle">01/02 14:00</text>
<text x="610.7" y="214" text-anchor="middle">01/02 21:00</text>
<text x="696.0" y="214" text-anchor="middle">02/02 04:00</text>
<text x="781.4" y="214" text-anchor="middle">02/02 11:00</text>
<text x="866.8" y="214" text-anchor="middle">02/02 18:00</text>
<text x="952.2" y="214" text-anchor="middle">03/02 01:00</text>
<text x="1037.6" y="214" text-anchor="middle">03/02 08:00</text>
<text x="1123.0" y="214" text-anchor="middle">03/02 15:00</text>
<text x="1208.4" y="214" text-anchor="middle">03/02 22:00</text>
<text x="1293.7" y="214" text-anchor="middle">04/02 05:00</text>
<text x="1379.1" y="214" text-anchor="middle">04/02 12:00</text>
<text x="1464.5" y="214" text-anchor="middle">04/02 19:00</text>
  <rect x="713" y="265.3" width="23.5" height="13" rx="3" fill="#0b6fe9"/><text x="741" y="275.8" style="fill:#444;font-size:11.8px">OnDemand</text>
  <rect x="810" y="265.3" width="23.5" height="13" rx="3" fill="#0ea5f6"/><text x="839" y="275.8" style="fill:#444;font-size:11.8px">Spot</text>
  <rect x="872" y="265.3" width="23.5" height="13" rx="3" fill="#22c1dc"/><text x="901" y="275.8" style="fill:#444;font-size:11.8px">Reserved</text>
  <rect x="960" y="265.3" width="23.5" height="13" rx="3" fill="#0a4a9f"/><text x="989" y="275.8" style="fill:#444;font-size:11.8px">Tax</text>
  <rect x="1016.3" y="265.3" width="23.5" height="13" rx="3" fill="#f95f62"/><text x="1044.5" y="275.8" style="fill:#444;font-size:11.8px">Savings Plan</text>
  <rect x="349" y="164.5" width="1171" height="1.1" fill="#a3a8ae"/>
</svg>
<!-- TABLE CARD -->
<div class="card" style="left:283px;top:333px;width:1300px;height:420px"></div>
<div class="abs" style="left:284px;top:454.5px;width:1252px;height:45px;background:#f3f6f9"></div>
<div class="abs" style="left:399px;top:393px;width:146px;height:340px;background:linear-gradient(90deg,#d7dce2 0,#e3e7ec 5px,#ebeff3 10px,#eff3f7 16px,#eff3f7 100%)"></div>
<div class="hl" style="left:284px;top:392.5px;width:1252px"></div>
<div class="hl" style="left:284px;top:454px;width:1252px"></div>
<div class="hl" style="left:284px;top:499px;width:1252px"></div>
<div class="hl" style="left:284px;top:545px;width:1252px"></div>
<div class="hl" style="left:284px;top:591px;width:1252px"></div>
<div class="hl" style="left:284px;top:637px;width:1252px"></div>
<div class="hl" style="left:284px;top:683px;width:1252px"></div>
<div class="vl" style="left:544.5px;top:393px;height:336px"></div>
<div class="vl" style="left:675.6px;top:393px;height:336px"></div>
<div class="vl" style="left:828px;top:393px;height:336px"></div>
<div class="vl" style="left:944.2px;top:393px;height:336px"></div>
<div class="vl" style="left:1060.2px;top:393px;height:336px"></div>
<div class="vl" style="left:1176.1px;top:393px;height:336px"></div>
<div class="vl" style="left:1292px;top:393px;height:336px"></div>
<div class="vl" style="left:1408px;top:393px;height:336px"></div>
<div class="vl" style="left:1524px;top:393px;height:336px"></div>
<div class="th" style="left:298px;top:407.8px;line-height:14px">NAME<svg class="srt" viewBox="0 0 7 11"><path d="M3.5 0.8 L6.3 4.3 H0.7 Z M3.5 10.2 L6.3 6.7 H0.7 Z" fill="#9ca6b5"/></svg></div>
<div class="th" style="left:414px;top:407.8px;line-height:14px">TOTAL<svg class="srt" viewBox="0 0 7 11"><path d="M3.5 0.8 L6.3 4.3 H0.7 Z M3.5 10.2 L6.3 6.7 H0.7 Z" fill="#9ca6b5"/></svg></div>
<div class="th" style="left:558px;top:407.8px;line-height:14px">TOTAL SPEND(%)<svg class="srt" viewBox="0 0 7 11"><path d="M3.5 0.8 L6.3 4.3 H0.7 Z M3.5 10.2 L6.3 6.7 H0.7 Z" fill="#9ca6b5"/></svg></div>
<div class="th" style="left:690px;top:407.8px;line-height:14px">LAST PERIOD'S<svg class="srt" viewBox="0 0 7 11"><path d="M3.5 0.8 L6.3 4.3 H0.7 Z M3.5 10.2 L6.3 6.7 H0.7 Z" fill="#9ca6b5"/></svg></div>
<div class="th" style="left:843px;top:407.8px;line-height:14px">04/02 23:00<svg class="srt" viewBox="0 0 7 11"><path d="M3.5 0.8 L6.3 4.3 H0.7 Z M3.5 10.2 L6.3 6.7 H0.7 Z" fill="#9ca6b5"/></svg></div>
<div class="th" style="left:959px;top:407.8px;line-height:14px">04/02 22:00<svg class="srt" viewBox="0 0 7 11"><path d="M3.5 0.8 L6.3 4.3 H0.7 Z M3.5 10.2 L6.3 6.7 H0.7 Z" fill="#9ca6b5"/></svg></div>
<div class="th" style="left:1075px;top:407.8px;line-height:14px">04/02 21:00<svg class="srt" viewBox="0 0 7 11"><path d="M3.5 0.8 L6.3 4.3 H0.7 Z M3.5 10.2 L6.3 6.7 H0.7 Z" fill="#9ca6b5"/></svg></div>
<div class="th" style="left:1191px;top:407.8px;line-height:14px">04/02 20:00<svg class="srt" viewBox="0 0 7 11"><path d="M3.5 0.8 L6.3 4.3 H0.7 Z M3.5 10.2 L6.3 6.7 H0.7 Z" fill="#9ca6b5"/></svg></div>
<div class="th" style="left:1307px;top:407.8px;line-height:14px">04/02 19:00<svg class="srt" viewBox="0 0 7 11"><path d="M3.5 0.8 L6.3 4.3 H0.7 Z M3.5 10.2 L6.3 6.7 H0.7 Z" fill="#9ca6b5"/></svg></div>
<div class="th" style="left:1423px;top:407.8px;line-height:14px">04/02 18:00<svg class="srt" viewBox="0 0 7 11"><path d="M3.5 0.8 L6.3 4.3 H0.7 Z M3.5 10.2 L6.3 6.7 H0.7 Z" fill="#9ca6b5"/></svg></div>
<div class="abs" style="left:690px;top:425px;font-size:11px;line-height:14px;color:#9aa4b3">Spend</div>
<div class="td" style="left:298px;top:469px;line-height:16px;color:#1a1f27;-webkit-text-stroke:.3px #1a1f27;letter-spacing:.15px">Total Spend</div>
<div class="td b" style="left:414px;top:469px;line-height:16px">$10,879.23</div>
<div class="td" style="left:558px;top:469px;line-height:16px">100%</div>
<div class="td" style="left:690px;top:469px;line-height:16px"><span class="b">$60,912.73</span> <span class="g">-82.14%</span></div>
<div class="td b" style="left:843px;top:469px;line-height:16px">$110.31</div>
<div class="td b" style="left:959px;top:469px;line-height:16px">$102.47</div>
<div class="td b" style="left:1075px;top:469px;line-height:16px">$124.01</div>
<div class="td b" style="left:1191px;top:469px;line-height:16px">$136.17</div>
<div class="td b" style="left:1307px;top:469px;line-height:16px">$124.37</div>
<div class="td b" style="left:1423px;top:469px;line-height:16px">$96.11</div>
<div class="td" style="left:298px;top:515px;line-height:16px;">OnDemand</div>
<div class="td b" style="left:414px;top:515px;line-height:16px">$8,747.41</div>
<div class="td" style="left:558px;top:515px;line-height:16px">80.4%</div>
<div class="td" style="left:690px;top:515px;line-height:16px"><span class="b">$58,495.75</span> <span class="g">-85.05%</span></div>
<div class="td" style="left:843px;top:515px;line-height:16px">$85.95</div>
<div class="td" style="left:959px;top:515px;line-height:16px">$76.35</div>
<div class="td" style="left:1075px;top:515px;line-height:16px">$92.79</div>
<div class="td" style="left:1191px;top:515px;line-height:16px">$102.28</div>
<div class="td" style="left:1307px;top:515px;line-height:16px">$91.73</div>
<div class="td" style="left:1423px;top:515px;line-height:16px">$70.11</div>
<div class="td" style="left:298px;top:560.7px;line-height:16px;">Spot</div>
<div class="td b" style="left:414px;top:560.7px;line-height:16px">$2,164.20</div>
<div class="td" style="left:558px;top:560.7px;line-height:16px">19.89%</div>
<div class="td" style="left:690px;top:560.7px;line-height:16px"><span class="b">$2,484.75</span> <span class="g">-12.9%</span></div>
<div class="td" style="left:843px;top:560.7px;line-height:16px">$24.79</div>
<div class="td" style="left:959px;top:560.7px;line-height:16px">$26.56</div>
<div class="td" style="left:1075px;top:560.7px;line-height:16px">$31.65</div>
<div class="td" style="left:1191px;top:560.7px;line-height:16px">$34.33</div>
<div class="td" style="left:1307px;top:560.7px;line-height:16px">$33.08</div>
<div class="td" style="left:1423px;top:560.7px;line-height:16px">$26.32</div>
<div class="td" style="left:298px;top:606.8px;line-height:16px;">Reserved</div>
<div class="td b" style="left:414px;top:606.8px;line-height:16px">$16.29</div>
<div class="td" style="left:558px;top:606.8px;line-height:16px">0.15%</div>
<div class="td" style="left:690px;top:606.8px;line-height:16px"><span class="b">$0.00</span> <span class="">0%</span></div>
<div class="td" style="left:843px;top:606.8px;line-height:16px">$0.00</div>
<div class="td" style="left:959px;top:606.8px;line-height:16px">$0.00</div>
<div class="td" style="left:1075px;top:606.8px;line-height:16px">$0.00</div>
<div class="td" style="left:1191px;top:606.8px;line-height:16px">$0.00</div>
<div class="td" style="left:1307px;top:606.8px;line-height:16px">$0.00</div>
<div class="td" style="left:1423px;top:606.8px;line-height:16px">$0.00</div>
<div class="td" style="left:298px;top:653px;line-height:16px;">Tax</div>
<div class="td b" style="left:414px;top:653px;line-height:16px">$0.00</div>
<div class="td" style="left:558px;top:653px;line-height:16px">0%</div>
<div class="td" style="left:690px;top:653px;line-height:16px"><span class="b">$0.00</span> <span class="">0%</span></div>
<div class="td" style="left:843px;top:653px;line-height:16px">$0.00</div>
<div class="td" style="left:959px;top:653px;line-height:16px">$0.00</div>
<div class="td" style="left:1075px;top:653px;line-height:16px">$0.00</div>
<div class="td" style="left:1191px;top:653px;line-height:16px">$0.00</div>
<div class="td" style="left:1307px;top:653px;line-height:16px">$0.00</div>
<div class="td" style="left:1423px;top:653px;line-height:16px">$0.00</div>
<div class="td" style="left:298px;top:699px;line-height:16px;">Savings Plan</div>
<div class="td b" style="left:414px;top:699px;line-height:16px">-$48.67</div>
<div class="td" style="left:558px;top:699px;line-height:16px">-0.45%</div>
<div class="td" style="left:690px;top:699px;line-height:16px"><span class="b">-$67.77</span> <span class="r">+28.19%</span></div>
<div class="td" style="left:843px;top:699px;line-height:16px">-$0.43</div>
<div class="td" style="left:959px;top:699px;line-height:16px">-$0.44</div>
<div class="td" style="left:1075px;top:699px;line-height:16px">-$0.44</div>
<div class="td" style="left:1191px;top:699px;line-height:16px">-$0.43</div>
<div class="td" style="left:1307px;top:699px;line-height:16px">-$0.44</div>
<div class="td" style="left:1423px;top:699px;line-height:16px">-$0.32</div>
<div class="abs" style="left:302px;top:351px;width:27px;height:27px;border-radius:50%;background:#3ec4d5"></div>
<svg class="abs" style="left:302px;top:351px" width="27" height="27" viewBox="0 0 27 27"><circle cx="13.5" cy="13.5" r="7.6" fill="none" stroke="#fff" stroke-width="1.1"/><text x="13.5" y="17.6" text-anchor="middle" font-family="Liberation Sans" font-size="11.5" fill="#fff">$</text></svg>
<div class="abs" style="left:339px;top:352.5px;font-size:16.1px;line-height:22px;font-weight:bold;color:#1b1d21;white-space:nowrap">Hourly spend by Purchase Option</div>
<div class="abs" style="left:1330px;top:339px;width:192px;height:36px;border:1px solid #dfe3e8;border-radius:4px;background:#fff"></div>
<svg class="abs" style="left:1342px;top:348px" width="16" height="16" viewBox="0 0 16 16"><circle cx="6.8" cy="6.8" r="5" fill="none" stroke="#8b96a6" stroke-width="1.3"/><path d="M10.6 10.6 L14.3 14.3" stroke="#8b96a6" stroke-width="1.3" stroke-linecap="round"/></svg>
<div class="abs" style="left:1366px;top:348.8px;font-size:13.2px;line-height:18px;color:#8b96a6">Search Name..</div>
<div class="abs" style="left:281.2px;top:389px;width:264.2px;height:344.3px;border:5px solid #f65659;border-radius:11px"></div>
<div class="abs" style="left:1476px;top:698px;width:60px;height:34px;background:radial-gradient(ellipse at 100% 100%,rgba(60,70,90,.06) 0,rgba(60,70,90,.03) 45%,rgba(60,70,90,0) 80%)"></div>
</div>
</body>
</html>
